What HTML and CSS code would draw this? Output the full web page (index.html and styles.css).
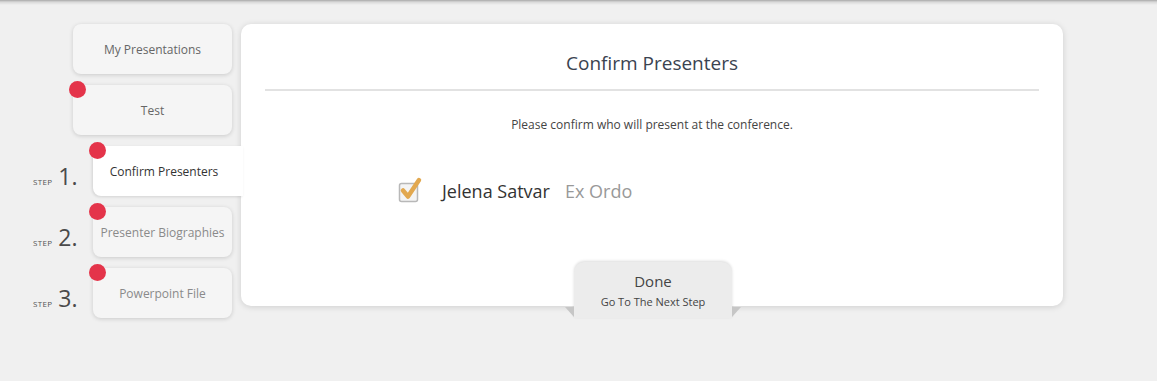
FILE: index.html
```html
<!DOCTYPE html>
<html>
<head>
<meta charset="utf-8">
<link rel="stylesheet" href="styles.css">
</head>
<body>
<div class="topshade"></div>
<div class="page">
  <nav class="sidebar">
    <div class="row plain">
      <div class="tab">My Presentations</div>
    </div>
    <div class="row plain">
      <div class="tab"><span class="dot"></span>Test</div>
    </div>
    <div class="row">
      <div class="step"><span class="word">STEP</span><span class="num">1.</span></div>
      <div class="tab active"><span class="dot"></span>Confirm Presenters</div>
    </div>
    <div class="row">
      <div class="step"><span class="word">STEP</span><span class="num">2.</span></div>
      <div class="tab muted"><span class="dot"></span>Presenter Biographies</div>
    </div>
    <div class="row">
      <div class="step"><span class="word">STEP</span><span class="num">3.</span></div>
      <div class="tab muted"><span class="dot"></span>Powerpoint File</div>
    </div>
  </nav>
  <main class="panel">
    <h1 class="title">Confirm Presenters</h1>
    <div class="rule"></div>
    <p class="intro">Please confirm who will present at the conference.</p>
    <div class="presenter">
      <span class="check">
        <svg width="28" height="28" viewBox="0 0 28 28">
          <rect x="2.5" y="8.5" width="18" height="18" rx="2" fill="#f4f4f4" stroke="#b8b8b8" stroke-width="1.5"/>
          <path d="M6 15.5 L11 21.5 L22 5" fill="none" stroke="#e2a84f" stroke-width="4.5" stroke-linecap="round" stroke-linejoin="round"/>
        </svg>
      </span>
      <span class="name">Jelena Satvar</span>
      <span class="org">Ex Ordo</span>
    </div>
    <div class="done">
      <span class="fold left"></span>
      <span class="fold right"></span>
      <div class="done-title">Done</div>
      <div class="done-sub">Go To The Next Step</div>
    </div>
  </main>
</div>
</body>
</html>
```

FILE: styles.css
```css
* { box-sizing: border-box; }
html, body { margin: 0; padding: 0; }
body {
  background: #f0f0f0;
  font-family: "Open Sans", "Noto Sans", sans-serif;
  width: 1157px;
  height: 381px;
  overflow: hidden;
  position: relative;
}
.topshade {
  position: absolute;
  left: 0; top: 0; right: 0;
  height: 5px;
  background: linear-gradient(#a8a8a8, #d8d8d8 40%, #f0f0f0);
}
.page {
  display: flex;
  padding: 24px 0 0 33px;
}
.sidebar {
  width: 208px;
  display: flex;
  flex-direction: column;
  gap: 11px;
  position: relative;
  z-index: 2;
}
.row {
  display: flex;
  align-items: center;
  height: 50px;
}
.row.plain { padding-left: 40px; }
.step {
  width: 60px;
  display: flex;
  align-items: baseline;
  color: #555;
  padding-top: 11px;
}
.step .word {
  font-size: 8px;
  letter-spacing: 0.3px;
  margin-right: 6px;
  color: #555;
}
.step .num {
  font-size: 23px;
  line-height: 1;
  color: #4a4a4a;
}
.tab {
  position: relative;
  width: 139px;
  height: 50px;
  display: flex;
  align-items: center;
  justify-content: center;
  background: #f5f5f5;
  border-radius: 8px;
  box-shadow: 0 1px 4px rgba(0,0,0,0.16);
  font-size: 12px;
  color: #666;
}
.row.plain .tab { width: 159px; }
.tab.muted { color: #8a8a8a; }
.tab.active {
  background: #fff;
  color: #333;
  width: 151px;
  border-radius: 8px 0 0 8px;
  margin-right: -2px;
  box-shadow: -1px 1px 3px rgba(0,0,0,0.12);
  justify-content: flex-start;
  padding-left: 17px;
}
.dot {
  position: absolute;
  left: -4px;
  top: -4px;
  width: 17px;
  height: 17px;
  border-radius: 50%;
  background: #e4344a;
}
.panel {
  position: relative;
  width: 822px;
  height: 282px;
  background: #fff;
  border-radius: 10px;
  box-shadow: 0 1px 6px rgba(0,0,0,0.14);
  padding: 0 24px;
  text-align: center;
}
.title {
  margin: 0;
  padding-top: 26px;
  font-size: 19px;
  font-weight: normal;
  color: #3a4350;
  line-height: 26px;
  height: 65px;
}
.rule {
  height: 2px;
  background: #e2e2e2;
}
.intro {
  margin: 26px 0 0;
  font-size: 12px;
  color: #444;
  line-height: 16px;
}
.presenter {
  display: flex;
  align-items: center;
  margin: 43px 0 0 132px;
  height: 30px;
}
.check {
  display: inline-flex;
  width: 28px;
  height: 28px;
  margin-top: -4px;
}
.name {
  margin-left: 17px;
  font-size: 18px;
  color: #333;
}
.org {
  margin-left: 15px;
  font-size: 18px;
  color: #999;
}
.done {
  position: absolute;
  left: 333px;
  top: 238px;
  width: 158px;
  height: 56px;
  background: #ececec;
  border-radius: 10px 10px 0 0;
  box-shadow: 0 -1px 3px rgba(0,0,0,0.14);
  text-align: center;
  color: #444;
}
.done-title {
  font-size: 15px;
  padding-top: 9px;
  line-height: 20px;
}
.done-sub {
  font-size: 11px;
  margin-top: 3px;
  color: #444;
}
.fold {
  position: absolute;
  top: 45px;
  width: 0;
  height: 0;
  border-top: 10px solid #c6c6c6;
}
.fold.left {
  left: -9px;
  border-left: 9px solid transparent;
}
.fold.right {
  right: -9px;
  border-right: 9px solid transparent;
}
```
